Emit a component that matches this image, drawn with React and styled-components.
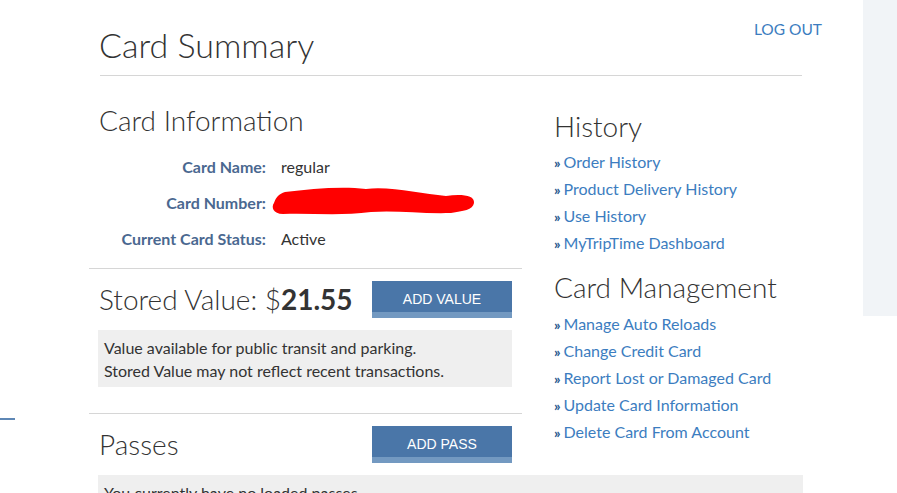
import React from "react";
import styled, { createGlobalStyle } from "styled-components";

const Global = createGlobalStyle`
  html, body { margin: 0; padding: 0; background: #fff; }
  body { font-family: Lato, "Noto Sans", sans-serif; color: #333; }
  * { box-sizing: border-box; }
`;

const Page = styled.div`
  display: flex;
  width: 897px;
  min-height: 493px;
  overflow: hidden;
`;

const Gutter = styled.div`
  width: 89px;
  flex: none;
`;

const GutterLine = styled.div`
  margin-top: 418px;
  width: 15px;
  height: 2px;
  background: #5e87b5;
`;

const Main = styled.main`
  width: 774px;
  flex: none;
`;

const SideStrip = styled.aside`
  width: 34px;
  height: 316px;
  flex: none;
  background: #f1f4f7;
`;

const Header = styled.header`
  display: flex;
  justify-content: space-between;
  align-items: flex-start;
  padding: 20px 41px 0 10px;
`;

const PageTitle = styled.h1`
  margin: 4px 0 0;
  font-size: 34px;
  font-weight: 300;
  line-height: 42px;
  color: #333;
`;

const LogOut = styled.a`
  font-size: 15.5px;
  line-height: 18px;
  color: #3c7dc0;
  text-decoration: none;
`;

const Rule = styled.div`
  height: 1px;
  background: #d6d6d6;
  margin: ${(p) => p.$m || "0"};
  width: ${(p) => p.$w || "auto"};
`;

const Grid = styled.div`
  display: grid;
  grid-template-columns: 433px 1fr;
  column-gap: 32px;
`;

const Column = styled.section`
  display: flex;
  flex-direction: column;
`;

const SectionTitle = styled.h2`
  margin: ${(p) => p.$m || "0"};
  padding-left: ${(p) => p.$pl || "0"};
  font-size: 28px;
  font-weight: 300;
  line-height: 35px;
  color: #333;
`;

const InfoList = styled.dl`
  margin: 11px 0 11px;
  display: grid;
  grid-template-columns: 177px 1fr;
  column-gap: 15px;
  font-size: 16px;
  line-height: 36px;
`;

const Label = styled.dt`
  text-align: right;
  font-weight: 700;
  color: #4a6890;
`;

const Value = styled.dd`
  margin: 0;
  color: #333;
  position: relative;
`;

const Scribble = styled.svg`
  position: absolute;
  left: -10px;
  top: -2px;
`;

const BlockHeader = styled.div`
  display: flex;
  justify-content: space-between;
  align-items: flex-start;
  margin-top: 12px;
  padding: 0 10px;
`;

const BlockTitle = styled.h2`
  margin: 0;
  font-size: 28px;
  font-weight: 300;
  line-height: 37px;
  color: #333;
  b { font-weight: 700; }
`;

const ActionButton = styled.button`
  width: 140px;
  height: 37px;
  padding: 5px 0 0;
  border: 0;
  border-bottom: 6px solid #7399c1;
  background: #4a76a8;
  color: #fff;
  font-family: "Liberation Sans", Arial, sans-serif;
  font-size: 14px;
  line-height: 26px;
  text-align: center;
  cursor: pointer;
`;

const NoteBox = styled.div`
  margin: ${(p) => p.$m || "12px 10px 0 9px"};
  width: ${(p) => p.$w || "auto"};
  padding: 6px 6px 5px;
  background: #efefef;
  font-size: 16px;
  line-height: 23px;
  color: #333;
`;

const FullRow = styled.div`
  grid-column: 1 / -1;
`;

const LinkList = styled.ul`
  list-style: none;
  margin: ${(p) => p.$m || "0"};
  padding: 0;
  font-size: 16px;
  line-height: 27px;
`;

const LinkItem = styled.li`
  height: 27px;
  color: #3c7dc0;
`;

const Raquo = styled.span`
  color: #2b5a8f;
  font-weight: 900;
  font-size: 14px;
  line-height: 0;
  margin-right: 3px;
`;

const Link = ({ children }) => (
  <LinkItem>
    <Raquo>»</Raquo>
    {children}
  </LinkItem>
);

export default function App() {
  return (
    <>
      <Global />
      <Page>
        <Gutter>
          <GutterLine />
        </Gutter>
        <Main>
          <Header>
            <PageTitle>Card Summary</PageTitle>
            <LogOut>LOG OUT</LogOut>
          </Header>
          <Rule $m="9px 0 0 11px" $w="702px" />
          <Grid>
            <Column>
              <SectionTitle $m="27px 0 0" $pl="10px">Card Information</SectionTitle>
              <InfoList>
                <Label>Card Name:</Label>
                <Value>regular</Value>
                <Label>Card Number:</Label>
                <Value>
                  <Scribble width="206" height="36" viewBox="0 0 206 36">
                    <path
                      d="M14 9 C40 6, 70 3, 95 6 C120 3, 150 11, 175 13 C190 11, 204 12, 203 20 C202 27, 192 28, 180 30 C150 31, 125 27, 100 29 C70 33, 40 30, 12 31 C2 31, 0 24, 3 20 C5 14, 8 11, 14 9 Z"
                      fill="#ff0000"
                    />
                  </Scribble>
                </Value>
                <Label>Current Card Status:</Label>
                <Value>Active</Value>
              </InfoList>
              <Rule />
              <BlockHeader>
                <BlockTitle>
                  Stored Value: $<b>21.55</b>
                </BlockTitle>
                <ActionButton>ADD VALUE</ActionButton>
              </BlockHeader>
              <NoteBox>
                Value available for public transit and parking.
                <br />
                Stored Value may not reflect recent transactions.
              </NoteBox>
              <Rule $m="26px 0 0" />
              <BlockHeader>
                <BlockTitle>Passes</BlockTitle>
                <ActionButton>ADD PASS</ActionButton>
              </BlockHeader>
            </Column>
            <Column>
              <SectionTitle $m="33px 0 0">History</SectionTitle>
              <LinkList $m="4px 0 0">
                <Link>Order History</Link>
                <Link>Product Delivery History</Link>
                <Link>Use History</Link>
                <Link>MyTripTime Dashboard</Link>
              </LinkList>
              <SectionTitle $m="14px 0 0">Card Management</SectionTitle>
              <LinkList $m="5px 0 0">
                <Link>Manage Auto Reloads</Link>
                <Link>Change Credit Card</Link>
                <Link>Report Lost or Damaged Card</Link>
                <Link>Update Card Information</Link>
                <Link>Delete Card From Account</Link>
              </LinkList>
            </Column>
            <FullRow>
              <NoteBox $m="12px 0 0 9px" $w="705px">
                You currently have no loaded passes.
              </NoteBox>
            </FullRow>
          </Grid>
        </Main>
        <SideStrip />
      </Page>
    </>
  );
}
